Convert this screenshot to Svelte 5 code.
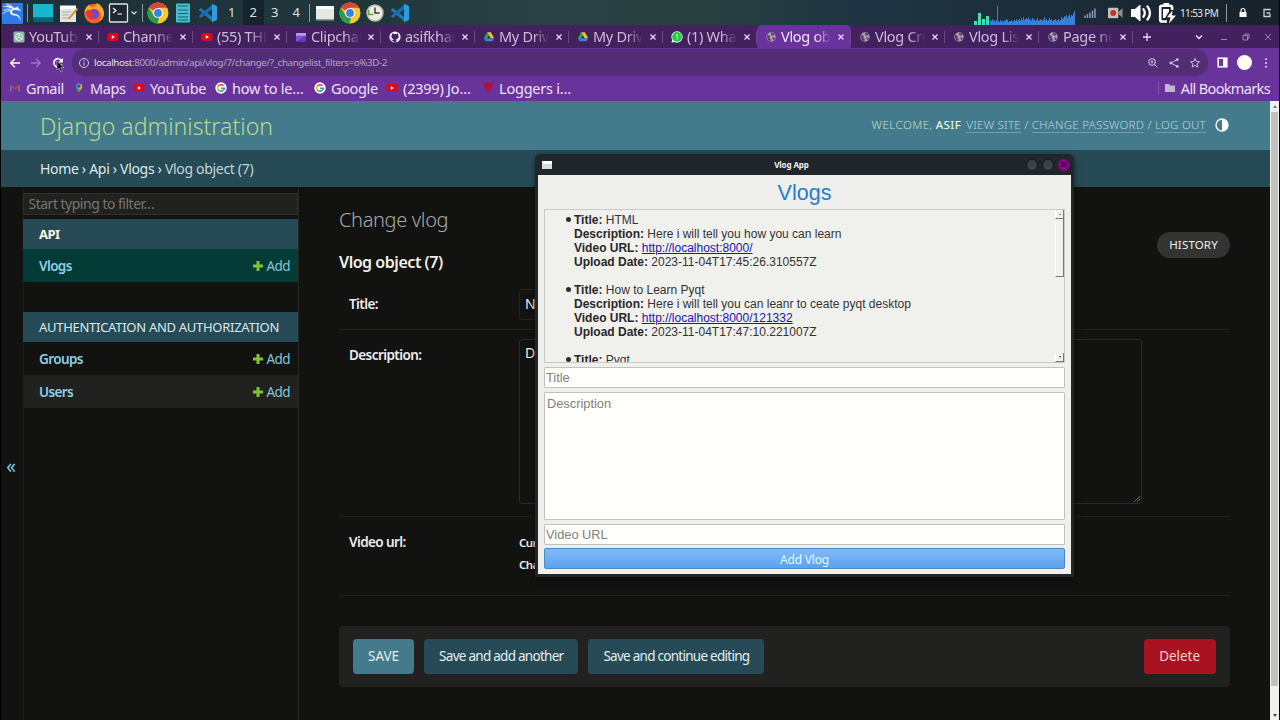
<script lang="ts">

    const tabs = [
        { icon: "gpt", title: "YouTube" },
        { icon: "youtube", title: "Channel" },
        { icon: "youtube", title: "(55) THE" },
        { icon: "clip", title: "Clipcham" },
        { icon: "github", title: "asifkhan" },
        { icon: "drive", title: "My Drive" },
        { icon: "drive", title: "My Drive" },
        { icon: "whatsapp", title: "(1) What" },
        { icon: "globe", title: "Vlog obj", active: true },
        { icon: "globe", title: "Vlog Cre" },
        { icon: "globe", title: "Vlog List" },
        { icon: "globe", title: "Page not" }
    ];

    const bookmarks = [
        { icon: "gmail", title: "Gmail" },
        { icon: "maps", title: "Maps" },
        { icon: "youtube", title: "YouTube" },
        { icon: "google", title: "how to le…" },
        { icon: "google", title: "Google" },
        { icon: "youtube", title: "(2399) Jo…" },
        { icon: "triangle", title: "Loggers i…" }
    ];

    const apps = [
        { caption: "API", current: true, models: ["Vlogs"] },
        { caption: "AUTHENTICATION AND AUTHORIZATION", current: false, models: ["Groups", "Users"] }
    ];

    const vlogs = [
        { title: "HTML", description: "Here i will tell you how you can learn", url: "http://localhost:8000/", date: "2023-11-04T17:45:26.310557Z" },
        { title: "How to Learn Pyqt", description: "Here i will tell you can leanr to ceate pyqt desktop", url: "http://localhost:8000/121332", date: "2023-11-04T17:47:10.221007Z" },
        { title: "Pyqt", description: "", url: "", date: "" }
    ];

    // cpu graph samples in the panel
    const load = [5, 4, 6, 4, 5, 3, 5, 19, 4, 3, 5, 4, 4, 3, 5, 4, 6, 5, 3, 4, 4, 5, 3, 4, 5, 4, 6, 4, 5, 6, 4, 7, 5, 8, 5, 6, 7, 6, 8, 5, 6, 4, 7, 5, 6, 4, 5, 7, 4, 5, 6, 5, 4, 6, 8, 5, 6, 4, 5, 7, 5, 6, 4, 5, 5, 6, 4, 5, 6, 4, 5, 8, 6, 7, 9, 8, 10, 7, 9, 11, 8, 10, 9, 12, 14];

</script>

{#snippet favicon(name: string)}
    <svg class="favicon" viewBox="0 0 12 12">
        {#if name == "youtube"}
            <rect x="0.5" y="2" width="11" height="8" rx="2.2" fill="#d90a1c" />
            <path d="M4.8 4.2v3.6L8 6z" fill="#fff" />
        {:else if name == "gpt"}
            <rect x="0.5" y="0.5" width="11" height="11" rx="1.5" fill="#8fb7a5" />
            <path d="M6 2.2 9.2 4v4L6 9.8 2.8 8V4zM6 2.2v3.9M9.2 8 6 6.1M2.8 8 6 6.1" fill="none" stroke="#dcefe8" />
        {:else if name == "clip"}
            <rect x="1" y="2" width="10" height="8.5" rx="1.2" fill="#7c50d8" />
            <path d="M1 4.8V3.2Q1 2 2.2 2H11v2.8z" fill="#b79bf3" />
            <path d="M1 10.5 11 5v4.5q0 1-1 1z" fill="#6538c0" />
        {:else if name == "github"}
            <circle cx="6" cy="6" r="5.6" fill="#f3eff6" />
            <path d="M3.1 2.3 4.7 3.1h2.6l1.6-.8.2 1.8c1.4 2.2-.1 3.9-1.8 4.2l.2 3.2H4.5V9.9c-1.4.2-1.7-.6-2.2-1.3 1 0 1 .7 2.2.4l.2-.8C3 7.8 1.6 6.2 2.9 4.1z" fill="#43215f" />
        {:else if name == "drive"}
            <path d="M4.1 1.3.8 7.2l1.8 3L6 4.3z" fill="#20a464" />
            <path d="M4.1 1.3h3.7l3.4 5.9H7.8z" fill="#f0c03a" />
            <path d="M2.6 10.2h6.9l1.7-3H4.3z" fill="#3b7fe8" />
        {:else if name == "whatsapp"}
            <path d="M6 .2A5.7 5.7 0 1 1 3.4 11L.4 11.7l.8-2.9A5.7 5.7 0 0 1 6 .2z" fill="#e8f7e8" />
            <circle cx="6" cy="5.9" r="4.9" fill="#29c944" />
            <path d="M5 4.4 6.3 3.5v4.9" fill="none" stroke="#dff5df" stroke-width="1" />
        {:else if name == "globe"}
            <circle cx="6" cy="6" r="4.7" fill="#a79eae" />
            <path d="M2.2 3.5 5 5.2 4.2 7l1.6 1.2-.6 2.4C2.6 9.4 1.6 7 2.2 3.5zM6 1.7l3.3 1.1-.8 2-2.2-.5zM7.2 6.3l3 .6L8.4 9.6z" fill="#53386b" />
        {:else if name == "gmail"}
            <path d="M1.8 9.4v-6" stroke="#6a7ad8" stroke-width="1.5" fill="none" />
            <path d="M10.2 9.4v-6" stroke="#54a04e" stroke-width="1.5" fill="none" />
            <path d="M1.6 3.4 6 6.8l4.4-3.4" stroke="#d04038" stroke-width="1.7" fill="none" />
        {:else if name == "maps"}
            <path d="M2.7 4.3a3.4 3.4 0 0 1 6.6 0C9.3 7 7 8.4 6 11 5 8.4 2.7 7 2.7 4.3z" fill="#34a853" />
            <path d="M2.7 4.3a3.4 3.4 0 0 1 5.7-2.4L3.6 6.6Q2.7 5.6 2.7 4.3z" fill="#3f7fe8" />
            <path d="M9.3 4.3C9.3 6 8.5 6.9 7.5 8.2L4.8 6 8.5 1.9q.8 1 .8 2.4z" fill="#cdb04a" />
            <circle cx="6" cy="4.3" r="1.3" fill="#5d2f8f" />
        {:else if name == "google"}
            <circle cx="6" cy="6" r="5.7" fill="#fff" />
            <path d="M8.5 3.7A3.4 3.4 0 0 0 3 4.5" stroke="#ea4335" stroke-width="1.5" fill="none" />
            <path d="M3 4.5a3.4 3.4 0 0 0 0 3" stroke="#fbbc05" stroke-width="1.5" fill="none" />
            <path d="M3 7.5a3.4 3.4 0 0 0 5.3.9" stroke="#34a853" stroke-width="1.5" fill="none" />
            <path d="M8.3 8.4A3.3 3.3 0 0 0 9.4 6.2H6" stroke="#4285f4" stroke-width="1.5" fill="none" />
        {:else if name == "triangle"}
            <path d="M.5.8h11.3L6.2 11.5z" fill="#b80d38" />
        {/if}
    </svg>
{/snippet}

{#snippet chrome()}
    <svg class="app" viewBox="0 0 22 22">
        <circle cx="11" cy="11" r="10.5" fill="#f7c92d" />
        <path d="M11 11 1.900 5.800A10.500 10.500 0 0 1 20.100 5.800H11z" fill="#dc4437" />
        <path d="M10.500 21.500A10.500 10.500 0 0 1 1.900 5.800L6.700 13.500 12 16z" fill="#2b9a50" />
        <circle cx="11" cy="11" r="5.1" fill="#fff" />
        <circle cx="11" cy="11" r="3.9" fill="#3c7fdc" />
    </svg>
{/snippet}

{#snippet vscode()}
    <svg class="app" viewBox="0 0 22 22">
        <path d="M2 7.5 4 6l12 9.500V20L2.300 8.600z" fill="#1a78bd" />
        <path d="M2 14.5 4 16 16 6.500V2L2.300 13.400z" fill="#1a6db0" />
        <path d="M15 1.8 20 4v14l-5 2.2z" fill="#2f9bdf" />
    </svg>
{/snippet}

<div class="screen">
    <div class="panel">
        <svg class="kali" viewBox="0 0 22 22">
            <rect x="1" y="1" width="21" height="21" rx="1" fill="#3079e8" />
            <path d="M1.5 5C6 3 10.500 3.300 13.500 6c2.500-.8 5 .2 6.500 3l-3-.8-3.500-.2c-3 .2-3.500 3.300 0 3.800 4 .3 6 2.700 6.300 7.700-1.600-4.500-3.300-5.900-7-6C8 13.200 8 8 11.500 7 8.500 5 5 4.700 1.500 5z" fill="#eaf2ff" />
            <path d="M2.500 8.500Q6 6.500 10 7.200M1.500 12Q5 8.500 9.500 8.500M5 2l5.500 1.800M14.500 6l3-1" fill="none" stroke="#dbe9ff" stroke-width="1" />
        </svg>
        <i class="bar"></i>
        <svg class="app desk" viewBox="0 0 22 22"><rect x="1" y="2" width="20" height="18" fill="#0c94b4" /><rect x="1" y="2" width="20" height="13" fill="#19b6cf" /><rect x="1" y="15.5" width="20" height="4.5" fill="#0c5f75" /></svg>
        <svg class="app" viewBox="0 0 22 22"><path d="M2 4h16v16H2z" fill="#e4e3dc" /><path d="M2 3.5h16V7H2z" fill="#fff" /><path d="M4 10h9M4 13h7M4 16h9" stroke="#aaa" /><path d="M10.500 15.500 18.500 6l1.700 1.300-7.900 9.200-2.300.8z" fill="#d9923d" /></svg>
        <svg class="app" viewBox="0 0 22 22">
            <circle cx="11" cy="11.5" r="9.8" fill="#f0622b" />
            <path d="M1.500 10C3 4 5 4 6 2.500c1 2 2 2.500 5 3L14 1c4 2 7 6 7 10.500 0 3-2 7-4.500 8C20 12 17 8 12 7L5 8z" fill="#f9a827" />
            <circle cx="11" cy="12" r="5" fill="#7845c4" />
            <path d="M3 9c3-1 5 0 7 1.500 1.500 0 2 1 0 2C7 14 9 16 14 16c-5 4-11 0-11-7z" fill="#e5372e" />
        </svg>
        <svg class="app" viewBox="0 0 22 22"><rect x="1.5" y="2" width="18" height="18" rx="1" fill="#1d2730" stroke="#dfe4e4" stroke-width="1.3" /><path d="m5 6 3 2.500L5 11M9.500 12H14" fill="none" stroke="#fff" stroke-width="1.2" /></svg>
        <svg class="caret" viewBox="0 0 8 8"><path d="M1.500 2.500 4 5l2.500-2.500" fill="none" stroke="#dfe4e4" stroke-width="1.2" /></svg>
        <i class="bar"></i>
        <div class="launchers">
            {@render chrome()}
            <svg class="app" viewBox="0 0 22 22"><rect x="4" y="1.5" width="14" height="19" rx="1" fill="#45bfd0" /><path d="M6 4h10M6 8h10M6 11.500h10M6 15h10M6 18h10" stroke="#17616f" /></svg>
            {@render vscode()}
        </div>
        <div class="workspaces">
            <span>1</span><span class="current">2</span><span>3</span><span>4</span>
        </div>
        <i class="bar"></i>
        <div class="launchers tasks">
            <svg class="app" viewBox="0 0 22 22"><rect x="2" y="4" width="18" height="14" fill="#e7e8e2" /><rect x="2" y="4" width="18" height="3" fill="#fff" /><rect x="2" y="17" width="18" height="1.5" fill="#929b95" /></svg>
            {@render chrome()}
            <svg class="app" viewBox="0 0 22 22"><circle cx="11" cy="11" r="8" fill="#ecebdd" stroke="#b9b9ab" stroke-width="1.5" /><path d="M11 5.500V11h4.500" fill="none" stroke="#343731" stroke-width="1.4" /><path d="M4.800 8v4.500h4.500" fill="none" stroke="#62a348" stroke-width="1.5" /></svg>
            {@render vscode()}
        </div>
        <div class="tray">
            <svg class="netgraph" viewBox="0 0 102 21" width="102" height="21">
                <path d="M0 17h3v4H0zM4 9h3v12H4zM8 15h3v6H8zM12 12h3v9h-3z" fill="#3fe0b2" />
                {#each load as value, i}
                    <rect x={16 + i} y={21 - value} width="1" height={value} fill="#3a7fd6" />
                {/each}
            </svg>
            <svg class="signal" viewBox="0 0 12 12"><path d="M1 8.500V11M3.500 7v4M6 5.500V11M8.500 3.500V11M11 1.500V11" stroke="#7d9cc0" stroke-width="1.5" /></svg>
            <svg class="camera" viewBox="0 0 16 12"><rect width="11" height="11" y=".5" rx="1" fill="#c6c0bb" /><path d="M11 5 15.500 1v10L11 7z" fill="#8f908c" /><circle cx="5.5" cy="6" r="3.2" fill="#c4332c" /></svg>
            <svg class="volume" viewBox="0 0 22 20"><path d="M0 6.500h4L9 2v16l-5-4.500H0z" fill="#fff" stroke="#fff" stroke-linejoin="round" /><path d="M12.500 6.300q2.600 3.700 0 7.400M16.500 3.500q5 6.500 0 13" fill="none" stroke="#fff" stroke-width="2.3" stroke-linecap="round" /></svg>
            <svg class="battery" viewBox="0 0 20 22"><path d="M9 19.500H4q-1.800 0-1.800-1.800V5.500Q2.200 3.700 4 3.700h8.300q1.800 0 1.800 1.800V8" fill="none" stroke="#fff" stroke-width="2.6" /><path d="M5.500 1H11v3H5.500zM5 7h6v2.500L7 16H5z" fill="#fff" /><path d="M14.500 8.500 9 15.300h3.500L11 21.500l7-8h-4z" fill="#fff" /></svg>
            <span class="clock">11:53 PM</span>
            <i class="bar"></i>
            <svg class="lock" viewBox="0 0 10 12"><rect x="1.5" y="5" width="7" height="5" fill="#fff" /><path d="M3 5V3.500a2 2 0 0 1 4 0V5" fill="none" stroke="#fff" stroke-width="1.2" /></svg>
            <svg class="logout" viewBox="0 0 10 12"><path d="M8 3.500v-1H2v7h6v-3M4.500 6H8" fill="none" stroke="#c8d0d4" stroke-width="1.3" /></svg>
        </div>
    </div>

    <div class="tabs">
        {#each tabs as tab}
            <div class="tab" class:active={tab.active}>
                {@render favicon(tab.icon)}
                <span class="tabtitle">{tab.title}</span>
                <svg class="close" viewBox="0 0 8 8"><path d="m1.500 1.500 5 5m0-5-5 5" stroke="currentColor" stroke-width="1.2" /></svg>
            </div>
        {/each}
        <svg class="plus" viewBox="0 0 10 10"><path d="M5 1v8M1 5h8" stroke="#eadcf1" stroke-width="1.3" /></svg>
        <div class="winbuttons">
            <svg viewBox="0 0 10 10"><path d="m2 3.500 3 3 3-3" fill="none" stroke="#eadcf1" stroke-width="1.5" /></svg>
            <svg viewBox="0 0 10 10"><path d="M2 7.500h6" stroke="#9d85ad" /></svg>
            <svg viewBox="0 0 10 10"><path d="M2 3.500h4.500V8H2zM4 3.500V2h4v4.500H6.500" fill="none" stroke="#9d85ad" /></svg>
            <svg viewBox="0 0 10 10"><path d="m2 2 6 6m0-6L2 8" stroke="#9d85ad" /></svg>
        </div>
    </div>

    <div class="toolbar">
        <svg class="nav" viewBox="0 0 12 12"><path d="M11 6H2m4-4.200L1.800 6 6 10.200" fill="none" stroke="#fff" stroke-width="1.5" /></svg>
        <svg class="nav" viewBox="0 0 12 12"><path d="M1 6h9M6 1.800 10.200 6 6 10.200" fill="none" stroke="#9c78bf" stroke-width="1.3" /></svg>
        <div class="reload">
            <svg class="nav" viewBox="0 0 12 12"><path d="M9.900 7.500A4.200 4.200 0 1 1 9.500 3.500" fill="none" stroke="#fff" stroke-width="1.6" /><path d="M10.800 1v4.500H6.300z" fill="#fff" /></svg>
            <svg class="cursor" viewBox="0 0 9 13"><path d="M1 1v9l2.200-2L4.800 12l1.600-.7-1.500-3.700H8z" fill="#0c0710" stroke="#cbbfd4" stroke-width=".6" /></svg>
        </div>
        <div class="address">
            <svg class="info" viewBox="0 0 12 12"><circle cx="6" cy="6" r="4.5" fill="none" stroke="#d8c7e2" /><path d="M6 5.500v3M6 3.300v1.200" stroke="#d8c7e2" stroke-width="1.1" /></svg>
            <span class="url"><b>localhost</b>:8000/admin/api/vlog/7/change/?_changelist_filters=o%3D-2</span>
            <svg class="tool" viewBox="0 0 12 12"><circle cx="5" cy="5" r="3.2" fill="none" stroke="#d0bedc" stroke-width="1.1" /><path d="m7.500 7.500 3 3M3.500 5h3M5 3.500v3" stroke="#d0bedc" /></svg>
            <svg class="tool" viewBox="0 0 12 12"><path d="M9.500 2.500 2.800 6l6.700 3.500" fill="none" stroke="#d0bedc" /><circle cx="9.3" cy="2.6" r="1.4" fill="#d0bedc" /><circle cx="2.8" cy="6" r="1.4" fill="#d0bedc" /><circle cx="9.3" cy="9.4" r="1.4" fill="#d0bedc" /></svg>
            <svg class="tool" viewBox="0 0 12 12"><path d="m6 1.500 1.300 3 3.200.3-2.400 2.100.7 3.200L6 8.400l-2.800 1.700.7-3.200-2.400-2.100 3.200-.3z" fill="none" stroke="#d0bedc" /></svg>
        </div>
        <svg class="sidepanel" viewBox="0 0 12 12"><rect x="2" y="2" width="8" height="8" fill="none" stroke="#fff" stroke-width="1.4" /><path d="M6.500 2H10v8H6.500z" fill="#fff" /></svg>
        <i class="avatar"></i>
        <svg class="dots" viewBox="0 0 4 12"><path d="M1.200 1.500h1.600v1.600H1.200zM1.200 5.200h1.600v1.600H1.200zM1.200 8.900h1.600v1.600H1.200z" fill="#fff" /></svg>
    </div>

    <div class="bookmarks">
        {#each bookmarks as bookmark}
            <div class="bookmark">{@render favicon(bookmark.icon)}<span>{bookmark.title}</span></div>
        {/each}
        <div class="allbookmarks">
            <svg class="favicon" viewBox="0 0 12 12"><path d="M1 2h4l1.200 1.500H11V10H1z" fill="#c4b5cf" /></svg>
            <span>All Bookmarks</span>
        </div>
    </div>

    <div class="view">
        <div class="django">
            <header>
                <h1>Django administration</h1>
                <div class="usertools">
                    <span>WELCOME,</span> <strong>ASIF</strong> <span class="links"><a href="/">VIEW SITE</a> / <a href="/">CHANGE PASSWORD</a> / <a href="/">LOG OUT</a></span>
                    <svg class="theme" viewBox="0 0 14 14"><circle cx="7" cy="7" r="6" fill="none" stroke="#fff" stroke-width="1.3" /><path d="M7 1a6 6 0 0 1 0 12z" fill="#fff" /></svg>
                </div>
            </header>
            <nav class="breadcrumbs">Home › Api › Vlogs › <span>Vlog object (7)</span></nav>
            <div class="main">
                <div class="togglenav">«</div>
                <aside>
                    <div class="filter">Start typing to filter…</div>
                    {#each apps as app}
                        <section>
                            <div class="caption" class:section={app.current}>{app.caption}</div>
                            {#each app.models as model}
                                <div class="model" class:current={app.current}>
                                    <b>{model}</b>
                                    <span><svg class="add" viewBox="0 0 10 10"><path d="M3.500 0h3v3.500H10v3H6.500V10h-3V6.500H0v-3h3.500z" fill="#7cc62f" /></svg>Add</span>
                                </div>
                            {/each}
                        </section>
                    {/each}
                </aside>
                <div class="content">
                    <div class="heading">
                        <div>
                            <h2>Change vlog</h2>
                            <h3>Vlog object (7)</h3>
                        </div>
                        <span class="history">HISTORY</span>
                    </div>
                    <div class="row titlerow"><b>Title:</b><div class="input">N</div></div>
                    <div class="row descrow"><b>Description:</b>
                        <div class="textarea">D
                            <svg class="grip" viewBox="0 0 6 6"><path d="M0 6 6 0M3 6l3-3" stroke="#8d8d88" stroke-width=".7" /></svg>
                        </div>
                    </div>
                    <div class="row urlrow"><b>Video url:</b><div class="urls"><span>Cur</span><span>Cha</span></div></div>
                    <div class="submit">
                        <span class="button default">SAVE</span>
                        <span class="button">Save and add another</span>
                        <span class="button">Save and continue editing</span>
                        <span class="button delete">Delete</span>
                    </div>
                </div>
            </div>
        </div>
        <div class="scrollbar"><i class="up"></i><div class="thumb"></div><i class="down"></i></div>
    </div>

    <div class="window">
        <div class="titlebar">
            <i class="winicon"></i>
            <span>Vlog App</span>
            <div class="controls"><i></i><i></i><i class="quit">×</i></div>
        </div>
        <div class="client">
            <div class="vlogshead">Vlogs</div>
            <div class="list">
                <ul>
                    {#each vlogs as vlog}
                        <li>
                            <b>Title:</b> {vlog.title}<br />
                            {#if vlog.description}
                                <b>Description:</b> {vlog.description}<br />
                                <b>Video URL:</b> <a href={vlog.url}>{vlog.url}</a><br />
                                <b>Upload Date:</b> {vlog.date}
                            {/if}
                        </li>
                    {/each}
                </ul>
                <div class="listbar">
                    <div class="step"><i class="up"></i></div>
                    <div class="handle"></div>
                    <div class="step last"><i class="down"></i></div>
                </div>
            </div>
            <div class="field">Title</div>
            <div class="field big">Description</div>
            <div class="field">Video URL</div>
            <div class="addvlog">Add Vlog</div>
        </div>
    </div>
</div>

<style>

    :global(body) {
        background: #000;
        overflow: hidden;
    }

    .screen {
        position: relative;
        box-sizing: border-box;
        width: 1280px;
        height: 720px;
        padding: 0 1px;

        display: flex;
        flex-direction: column;
        overflow: hidden;

        background: #000;
        font-family: "Noto Sans", sans-serif;
        font-size: 14px;
    }

    .screen * {
        box-sizing: border-box;
    }

    svg, i {
        flex: none;
        display: block;
    }

    /* desktop panel */

    .panel {
        height: 25px;
        display: flex;
        align-items: center;
        background: linear-gradient(90deg, #1e303a, #21363c 28%, #2a4144 42%, #27403f 55%, #1f3442 68%, #1c2c39 82%, #17212a);
    }

    .kali {
        width: 22px;
        height: 22px;
    }

    .panel .bar {
        width: 1px;
        height: 18px;
        margin: 0 4px;
        background: #8e9aa0;
    }

    .app {
        width: 22px;
        height: 22px;
        margin-right: 3px;
    }

    .desk {
        margin-right: 4px;
    }

    .caret {
        width: 8px;
        height: 8px;
        margin-left: -3px;
    }

    .launchers {
        display: flex;
        width: 74px;
    }

    .workspaces {
        display: flex;
        height: 25px;
        width: 84px;
    }

    .workspaces span {
        width: 21.5px;
        flex: none;
        line-height: 25px;
        text-align: center;
        font-size: 13px;
        color: #dbe0e2;
    }

    .workspaces .current {
        background: #15232d;
    }

    .tasks {
        width: 110px;
    }

    .tray {
        display: flex;
        align-items: center;
        margin-left: auto;
        width: 305px;
    }

    .netgraph { margin-top: 4px; }
    .signal { width: 12px; height: 12px; margin-left: 8px; }
    .camera { width: 15px; height: 12px; margin-left: 12px; }
    .volume { width: 22px; height: 20px; margin-left: 8px; }
    .battery { width: 20px; height: 22px; margin-left: 5px; }

    .clock {
        width: 40px;
        margin-left: 2px;
        font-size: 10px;
        white-space: nowrap;
        letter-spacing: -0.65px;
        color: #e4e7e8;
    }

    .tray .bar { margin: 0 11px 0 6px; }
    .lock { width: 10px; height: 12px; }
    .logout { width: 10px; height: 12px; margin-left: 14px; }

    /* browser chrome */

    .tabs {
        height: 23px;
        padding-left: 4px;
        display: flex;
        align-items: center;
        background: #43215f;
    }

    .tab {
        position: relative;
        width: 94px;
        height: 23px;
        padding: 0 6px 0 8px;
        flex: none;

        display: flex;
        align-items: center;

        color: #cdb9d9;
    }

    .tab::after {
        content: "";
        position: absolute;
        right: 0;
        top: 6px;
        width: 1px;
        height: 12px;
        background: #6b4a85;
    }

    .tab.active {
        background: #68339a;
        border-radius: 5px 5px 0 0;
        color: #f1e4f7;
    }

    .favicon {
        width: 12px;
        height: 12px;
    }

    .tabtitle {
        width: 50px;
        height: 22px;
        margin-left: 4px;
        padding-bottom: 1px;
        overflow: hidden;
        white-space: nowrap;
        font-size: 14.5px;
        line-height: 20px;
        letter-spacing: -0.3px;
        -webkit-mask-image: linear-gradient(90deg, #000 68%, transparent 100%);
        mask-image: linear-gradient(90deg, #000 68%, transparent 100%);
    }

    .close {
        width: 8px;
        height: 8px;
        margin-left: 6px;
        color: #eadcf1;
    }

    .plus {
        width: 10px;
        height: 10px;
        margin-left: 9px;
    }

    .winbuttons {
        display: flex;
        gap: 12px;
        margin-left: auto;
        padding-right: 6px;
    }

    .winbuttons svg {
        width: 10px;
        height: 10px;
    }

    .winbuttons svg:first-child {
        margin-right: 3px;
    }

    .toolbar {
        height: 29px;
        display: flex;
        align-items: center;
        padding-left: 7.5px;
        background: #68339a;
    }

    .nav {
        width: 12px;
        height: 12px;
        margin-right: 9.5px;
    }

    .reload {
        position: relative;
        width: 20px;
    }

    .cursor {
        position: absolute;
        left: 4px;
        top: 3px;
        width: 9px;
        height: 13px;
    }

    .address {
        width: 1136px;
        height: 27px;
        padding: 0 7px 0 6px;
        border-radius: 13px;

        display: flex;
        align-items: center;
        gap: 9px;

        background: #532d75;
    }

    .info {
        width: 12px;
        height: 12px;
    }

    .url {
        flex: 1;
        margin-left: -4.5px;
        font-size: 9.8px;
        letter-spacing: -0.38px;
        color: #b7a0c7;
    }

    .url b {
        font-weight: 400;
        color: #eadff0;
    }

    .tool {
        width: 12px;
        height: 12px;
    }

    .sidepanel {
        width: 13px;
        height: 13px;
        margin-left: 8px;
    }

    .avatar {
        width: 15px;
        height: 15px;
        margin-left: 8px;
        border-radius: 50%;
        background: #fffbf2;
    }

    .dots {
        width: 4px;
        height: 12px;
        margin-left: 12px;
    }

    .bookmarks {
        height: 24px;
        padding: 0 0 2px 8px;
        display: grid;
        grid-template-columns: 64px 60px 82px 99px 72px 96px 90px 1fr;
        align-items: center;
        background: #68339a;
        color: #eee0f6;
        font-size: 14.5px;
        letter-spacing: -0.37px;
        white-space: nowrap;
    }

    .bookmark {
        display: flex;
        align-items: center;
        gap: 5px;
    }

    .bookmark span, .allbookmarks span {
        line-height: 22px;
    }

    .bookmark:nth-child(4), .bookmark:nth-child(6), .bookmark:nth-child(7) {
        letter-spacing: -0.22px;
    }

    .allbookmarks {
        justify-self: end;
        display: flex;
        align-items: center;
        gap: 5px;
        height: 14px;
        margin-right: 9px;
        padding-left: 5px;
        border-left: 1px solid #8053a9;
        letter-spacing: -0.65px;
    }

    /* django admin */

    .view {
        flex: 1;
        min-height: 0;
        display: flex;
    }

    .django {
        flex: 1;
        display: flex;
        flex-direction: column;
        background: #121210;
        color: #eee;
    }

    header {
        height: 49px;
        padding: 0 41px 0 39px;
        display: flex;
        align-items: center;
        justify-content: space-between;
        background: #447b8c;
    }

    h1 {
        margin: 0;
        font-size: 23px;
        font-weight: 300;
        letter-spacing: 0.04px;
        color: #b9d98a;
    }

    .usertools {
        display: flex;
        align-items: center;
        padding-bottom: 2px;
        font-size: 11.5px;
        font-weight: 300;
        letter-spacing: 0.5px;
        color: #c3dfc0;
    }

    .usertools strong {
        margin: 0 5px 0 3px;
        color: #fdffe6;
    }

    .usertools a {
        color: #b5d5e0;
        text-decoration: none;
        border-bottom: 1px solid #6f9eac;
    }

    .links {
        letter-spacing: 0.27px;
    }

    .theme {
        width: 14px;
        height: 14px;
        margin-left: 9px;
        margin-top: 1px;
    }

    .breadcrumbs {
        height: 37px;
        padding-left: 39px;
        line-height: 37px;
        letter-spacing: -0.32px;
        background: #264b57;
        color: #dfe8ea;
    }

    .breadcrumbs span {
        color: #c5d4d8;
    }

    .main {
        flex: 1;
        display: flex;
    }

    .togglenav {
        width: 22px;
        padding: 267px 2px 0 0;
        text-align: center;
        font-size: 19px;
        line-height: 24px;
        color: #81c9e2;
    }

    aside {
        width: 276px;
        padding-top: 6px;
        border-right: 1px solid #252523;
        box-shadow: inset 1px 0 #1b1b19;
    }

    .filter {
        height: 22px;
        margin-bottom: 4px;
        padding-left: 4.5px;
        border: 1px solid #30302d;
        background: #212120;
        line-height: 20px;
        letter-spacing: -0.5px;
        color: #777770;
    }

    section {
        margin-bottom: 30px;
    }

    .caption {
        height: 30px;
        padding-left: 16px;
        line-height: 31px;
        letter-spacing: -0.28px;
        background: #264b57;
        color: #d9e8ec;
        font-size: 13px;
    }

    .caption.section {
        font-weight: 700;
        letter-spacing: -0.5px;
        color: #fbfce0;
    }

    .model {
        height: 33px;
        padding: 0 8px 0 16px;
        display: flex;
        align-items: center;
        justify-content: space-between;
        color: #81c8dc;
    }

    .model b {
        font-weight: 600;
        font-size: 13.5px;
        letter-spacing: -0.6px;
        color: #8fd0e6;
    }

    .model span {
        display: flex;
        align-items: center;
        gap: 4px;
        font-size: 13.5px;
        letter-spacing: -0.6px;
    }

    .model:nth-child(3) {
        background: #212120;
    }

    .model.current {
        background: #043b37;
    }

    .add {
        width: 10px;
        height: 10px;
    }

    .content {
        flex: 1;
        padding: 18px 40px 0 40px;
    }

    .heading {
        height: 74px;
        display: flex;
        justify-content: space-between;
    }

    h2 {
        margin: 0 0 15px;
        font-size: 20px;
        line-height: 30px;
        font-weight: 300;
        letter-spacing: -0.35px;
        color: #aaaaa5;
    }

    h3 {
        margin: 0;
        font-size: 16px;
        line-height: 24px;
        font-weight: 600;
        letter-spacing: -0.46px;
        color: #f0f0ea;
    }

    .history {
        width: 73px;
        height: 26px;
        margin-top: 27px;
        border-radius: 13px;
        background: #333331;
        line-height: 26px;
        text-align: center;
        font-size: 11.5px;
        letter-spacing: 0.15px;
    }

    .row {
        display: flex;
        align-items: flex-start;
        padding: 10px 0 0 10px;
        border-bottom: 1px solid #20201e;
    }

    .row > b {
        width: 170px;
        font-size: 13.5px;
        font-weight: 600;
        line-height: 30px;
        letter-spacing: -0.58px;
    }

    .titlerow { height: 51px; }
    .descrow { height: 187px; }
    .urlrow { height: 79px; }

    .input {
        width: 350px;
        height: 31px;
        border: 1px solid #252523;
        border-radius: 3px;
        padding-left: 5px;
        line-height: 28px;
    }

    .textarea {
        position: relative;
        width: 623px;
        height: 165px;
        margin-top: -1px;
        border: 1px solid #2b2b28;
        border-radius: 3px;
        padding: 2px 5px;
        line-height: 22px;
    }

    .grip {
        position: absolute;
        right: 1px;
        bottom: 1px;
        width: 6px;
        height: 6px;
    }

    .urls {
        display: flex;
        flex-direction: column;
        gap: 4px;
        padding-top: 7px;
        font-size: 11.5px;
        font-weight: 600;
        line-height: 18px;
        letter-spacing: -0.6px;
    }

    .submit {
        height: 61px;
        margin-top: 30px;
        padding: 0 14px;
        border-radius: 4px;
        display: flex;
        align-items: center;
        gap: 10px;
        background: #212120;
    }

    .button {
        height: 35px;
        padding: 0 15px;
        border-radius: 4px;
        line-height: 35px;
        white-space: nowrap;
        font-size: 13.5px;
        letter-spacing: -0.73px;
        background: #264b57;
        color: #e3eef0;
    }

    .button.default {
        letter-spacing: 0;
        background: #447b8c;
    }

    .button.delete {
        margin-left: auto;
        padding: 0 16px 0 15px;
        letter-spacing: -0.05px;
        background: #a91220;
        color: #f5cfd0;
    }

    .scrollbar {
        width: 9px;
        display: flex;
        flex-direction: column;
        align-items: center;
        background: #f1f1ee;
    }

    .up, .down {
        border: 2px solid transparent;
        border-top-width: 0;
        border-bottom: 3px solid #77777a;
    }

    .down {
        border-top: 3px solid #444;
        border-bottom: 0;
    }

    .scrollbar .up {
        margin: 4px 0;
    }

    .scrollbar .thumb {
        width: 7px;
        height: 574px;
        background: #c1c1be;
    }

    .scrollbar .down {
        margin: auto 0 3px;
    }

    /* vlog app window floating over the browser */

    .window {
        position: absolute;
        left: 535px;
        top: 154px;
        width: 539px;
        height: 423px;
        padding: 0 3px 3px;
        border-radius: 6px 6px 0 0;
        background: #20262a;
        box-shadow: 0 2px 6px #0008;
    }

    .titlebar {
        height: 21px;
        padding-left: 4px;
        display: grid;
        grid-template-columns: 1fr auto 1fr;
        align-items: center;
        color: #f2f2f0;
        font-size: 8px;
        font-weight: 700;
    }

    .titlebar > span {
        margin-left: -30px;
        line-height: 20px;
        letter-spacing: -0.1px;
    }

    .winicon {
        width: 10px;
        height: 8px;
        background: linear-gradient(#fff 35%, #d8dcd8 35%);
    }

    .controls {
        display: flex;
        gap: 4px;
        justify-self: end;
        padding-right: 1px;
    }

    .controls i {
        width: 12px;
        height: 12px;
        border-radius: 50%;
        border: 1px solid #171b1e;
        background: #3b4144;
    }

    .controls .quit {
        border-color: #8b008b;
        background: #8b008b;
        color: #1c0820;
        font-style: normal;
        font-size: 12px;
        line-height: 9px;
        text-align: center;
    }

    .client {
        height: 399px;
        padding: 0 6px;
        background: #efefed;
        font-family: "Liberation Sans", Arial, sans-serif;
        font-size: 12px;
        color: #333;
    }

    .vlogshead {
        height: 34px;
        line-height: 37px;
        text-align: center;
        font-size: 21.5px;
        color: #1e7fcb;
    }

    .list {
        height: 154px;
        display: flex;
        justify-content: space-between;
        overflow: hidden;
        border: 1px solid #c9c9c5;
        background: #f0f0ed;
    }

    ul {
        margin: 2.5px 0 0;
        padding: 0 0 0 29px;
        list-style: none;
    }

    li {
        position: relative;
        margin-bottom: 14px;
        line-height: 14px;
        white-space: nowrap;
    }

    li::before {
        content: "";
        position: absolute;
        left: -8px;
        top: 4px;
        width: 5px;
        height: 5px;
        border-radius: 50%;
        background: #2c2c2c;
    }

    li b {
        color: #282828;
    }

    li a {
        color: #2410c0;
    }

    .listbar {
        width: 9px;
        display: flex;
        flex-direction: column;
    }

    .step, .handle {
        border-right: 1px solid #777;
        border-bottom: 1px solid #777;
        border-left: 1px solid #fff;
    }

    .step {
        height: 9px;
        display: flex;
        align-items: center;
        justify-content: center;
    }

    .handle {
        height: 58px;
    }

    .step.last {
        margin-top: auto;
    }

    .step .up, .step .down {
        border-left-width: 1.5px;
        border-right-width: 1.5px;
    }

    .step .up { border-bottom-width: 2px; }
    .step .down { border-top-width: 2px; }

    .field {
        height: 21px;
        margin-top: 4px;
        padding: 0 1px;
        border: 1px solid #c1c1bd;
        border-radius: 1px;
        background: #fffffc;
        line-height: 19px;
        font-size: 12.8px;
        color: #80807c;
    }

    .field.big {
        height: 128px;
        padding: 1px 2px;
    }

    .addvlog {
        height: 21px;
        margin-top: 3px;
        border: 1px solid #4b87c4;
        border-radius: 2px;
        background: linear-gradient(#83baf8, #59a2f1);
        font-family: "Noto Sans", sans-serif;
        font-size: 12px;
        line-height: 21px;
        letter-spacing: -0.2px;
        text-align: center;
        color: #e8f8ff;
    }

</style>
